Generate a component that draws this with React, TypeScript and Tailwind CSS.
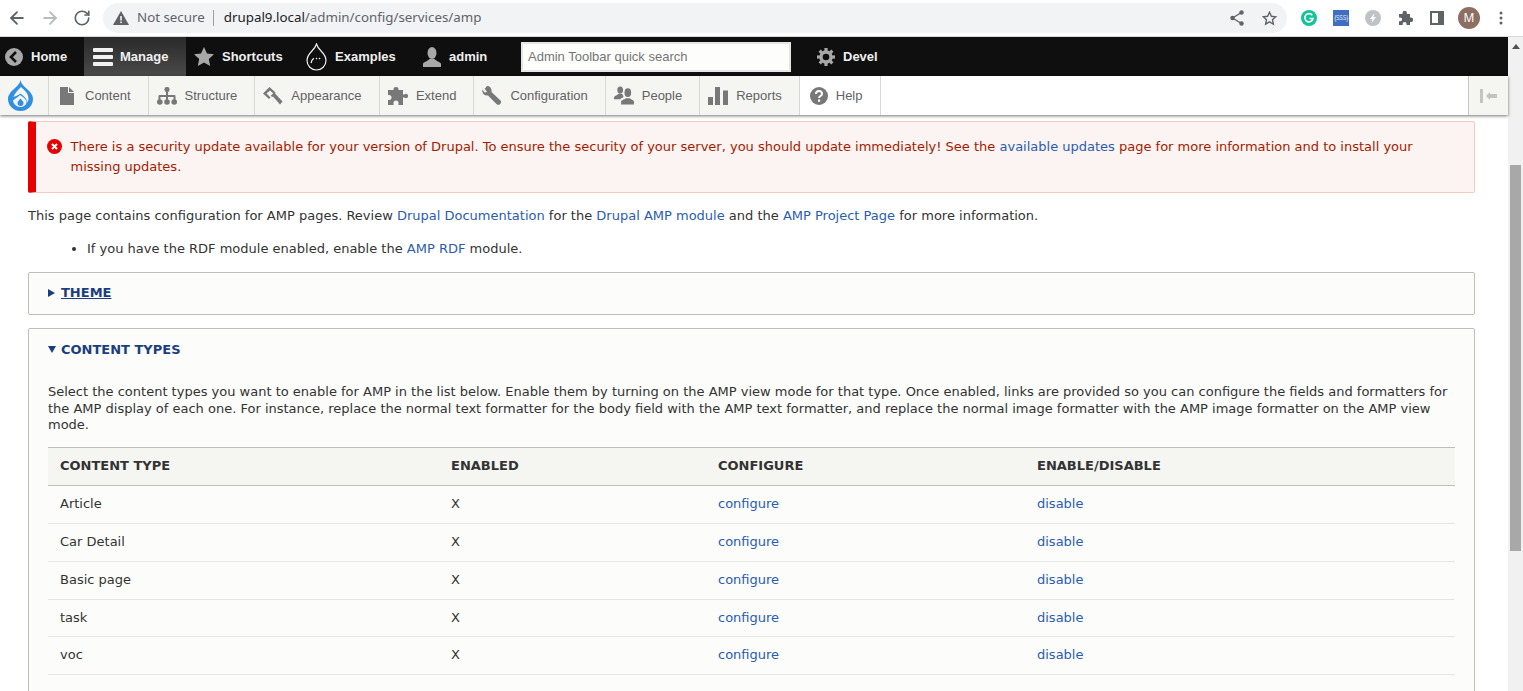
import { ArrowLeft, ArrowRight, RotateCw } from "lucide-react";

const dejavu = "font-['DejaVu_Sans',sans-serif]";

// admin toolbar icons, all grey fills
function FileIcon() {
  return (
    <svg width="14" height="18" viewBox="0 0 14 18" fill="#787878">
      <path d="M0 0h8v6h6v12H0z" />
      <path d="M9 0l5 5H9z" />
    </svg>
  );
}

function StructureIcon() {
  return (
    <svg width="20" height="18" viewBox="0 0 20 18" fill="#787878">
      <rect x="7.500" y="0" width="5" height="5" rx="2" />
      <path d="M9 4h2v4h6.500a1 1 0 0 1 1 1v4h-2v-3H11v3H9v-3H3.500v3h-2V9a1 1 0 0 1 1-1H9z" />
      <circle cx="2.800" cy="15" r="2.800" />
      <circle cx="10" cy="15" r="2.800" />
      <circle cx="17.200" cy="15" r="2.800" />
    </svg>
  );
}

function HammerIcon() {
  return (
    <svg width="20" height="18" viewBox="0 0 20 18" fill="#787878">
      <path d="M0 6.500L6.500 0l6 5.500-1.500 1.500-4-3.500L3.500 6.500l4 4L6 12z" />
      <path d="M7.500 9L11 5.500l2 1.500-3 3z" />
      <path d="M10 9.500l2.500-2.500 7 7.500-2.500 3z" />
    </svg>
  );
}

function PuzzleIcon() {
  return (
    <svg width="20" height="18" viewBox="0 0 20 18" fill="#787878">
      <path d="M0 3h5.500V2a2.500 2 0 0 1 5 0v1H15v4.500h1.500a2 2 0 0 1 3.500 1.500 2 2 0 0 1-3.500 1.500H15V18h-4.500v-2a2.500 2.500 0 0 0-5 0v2H0v-5h1a2.500 2.500 0 0 0 0-5H0z" />
    </svg>
  );
}

function WrenchIcon() {
  return (
    <svg width="20" height="19" viewBox="0 0 20 19" fill="#787878">
      <path d="M5 0L2.800 2.800 5 6 2.500 6.500 0.500 3.500C-0.500 7 2 10 6 9.500l9 9c2 1 4.500-1 4-3.500L9.500 6C10 2.500 8 0 5 0z" />
    </svg>
  );
}

function PeopleIcon() {
  return (
    <svg width="21" height="19" viewBox="0 0 21 19" fill="#787878">
      <ellipse cx="6.500" cy="3.800" rx="3" ry="3.800" />
      <path d="M0 13.500v-2C0 10 3 9.500 4.500 8h4C9.500 9 10 10 10 11c-2 1-3 2-3.500 2.500z" />
      <ellipse cx="14.500" cy="6.500" rx="3.500" ry="4.500" />
      <path d="M7.500 19v-3c0-1.500 3-2 5-3.500h4c2 1.500 4.500 2 4.500 3.500v3z" />
    </svg>
  );
}

function BarsIcon() {
  return (
    <svg width="20" height="18" viewBox="0 0 20 18" fill="#787878">
      <rect x="0" y="10" width="5" height="8" />
      <rect x="7" y="0" width="5" height="18" />
      <rect x="15" y="3.500" width="5" height="14.500" />
    </svg>
  );
}

function HelpIcon() {
  return (
    <svg width="18" height="18" viewBox="0 0 18 18">
      <circle cx="9" cy="9" r="9" fill="#787878" />
      <path d="M6 7c0-4 6-4 6 0 0 2-3 2-3 4" fill="none" stroke="#ffffff" strokeWidth="2" />
      <rect x="8" y="12.500" width="2.200" height="2.200" fill="#ffffff" />
    </svg>
  );
}

function GearIcon() {
  return (
    <svg width="18" height="18" viewBox="0 0 18 18">
      <circle cx="9" cy="9" r="5" fill="none" stroke="#a8a8a8" strokeWidth="3.400" />
      {[0, 45, 90, 135, 180, 225, 270, 315].map((a) => (
        <rect key={a} x="7.400" y="0" width="3.200" height="3.500" fill="#a8a8a8" transform={`rotate(${a} 9 9)`} />
      ))}
    </svg>
  );
}

function DrupalDrop() {
  return (
    <svg width="25" height="31" viewBox="0 0 25 31">
      <path
        d="M12.500 0c.5 3.500 3 5.500 6 8.500 3.500 3 6.500 6.500 6.500 10.500a12.500 12 0 0 1-25 0c0-4 3-7.500 6.500-10.500 3-3 5.500-5 6-8.500z"
        fill="#2f8fe0"
      />
      <path
        d="M5.500 17C6.500 13 10 10 13 7c3 3 7.500 6 7.500 11.500 0 1.500-.5 3-1 4-1-4.500-4-6.500-7-9-2 1.500-4.500 2.500-7 3.500z"
        fill="#f5f5f2"
      />
      <path d="M5 20.500c.5 4 4 6.500 7.500 6.500s6.500-2.500 6-6c-1-2.500-4-4.500-6.500-6-2 2-4.500 3.500-7 5.500z" fill="#f5f5f2" />
      <path d="M12.500 18.500c1 1.500 3 2.800 3 4.500a3 3 0 0 1-6 0c0-1.700 2-3 3-4.500z" fill="#2f8fe0" />
    </svg>
  );
}

function TopItem({ icon, label, active }: { icon: React.ReactNode; label: string; active?: boolean }) {
  return (
    <div
      className={`flex items-center h-full text-[13px] font-bold text-[#f0f0f0] ${
        active ? "bg-gradient-to-b from-[#2a2a2a] to-[#4a4a4a] px-[9px] gap-[7px]" : "gap-[8px]"
      }`}
    >
      {icon}
      <span>{label}</span>
    </div>
  );
}

function TrayItem({
  icon,
  label,
  first,
  wide,
}: {
  icon: React.ReactNode;
  label: string;
  first?: boolean;
  wide?: boolean;
}) {
  return (
    <div
      className={`flex items-center h-full pl-[8px] gap-[8px] border-r border-[#d8d8d4] bg-[#f5f5f2] text-[13px] text-[#636363] ${
        first ? "border-l" : ""
      } ${wide ? "pr-[17.500px]" : "pr-[17px]"}`}
    >
      <span className="w-[20px] flex justify-center">{icon}</span>
      <span>{label}</span>
    </div>
  );
}

const rows = ["Article", "Car Detail", "Basic page", "task", "voc"];

function A({ children }: { children: React.ReactNode }) {
  return <span className="text-[#2a5db0]">{children}</span>;
}

export default function App() {
  return (
    <div className="h-[691px] w-[1523px] overflow-hidden flex flex-col bg-white">
      {/* browser chrome */}
      <div className="h-[37px] shrink-0 border-b border-[#d8d8d8] flex items-center font-['Noto_Sans',sans-serif]">
        <div className="flex items-center pl-[7px] gap-[13px] w-[103px]">
          <ArrowLeft size={20} strokeWidth={2.25} className="text-[#5f6368]" />
          <ArrowRight size={20} strokeWidth={2.25} className="text-[#b9bbbe]" />
          <RotateCw size={18} strokeWidth={2.25} className="text-[#5f6368]" />
        </div>
        <div className="w-[1184px] h-[30px] rounded-[15px] bg-[#f1f3f4] flex items-center pl-[10px] pr-[8px]">
          <svg width="16" height="14" viewBox="0 0 16 14">
            <path d="M8 0l8 14H0z" fill="#5f6368" />
            <rect x="7.200" y="5" width="1.600" height="4.500" fill="#f1f3f4" />
            <rect x="7.200" y="10.500" width="1.600" height="1.600" fill="#f1f3f4" />
          </svg>
          <span className="ml-[8px] text-[13.330px] text-[#5f6368]">Not secure</span>
          <span className="ml-[8px] mr-[10px] w-px h-[16px] bg-[#9aa0a6]" />
          <span className="text-[13.330px] text-[#202124]">drupal9.local</span>
          <span className="text-[13.330px] text-[#5f6368]">/admin/config/services/amp</span>
          <div className="ml-auto flex items-center gap-[18px] pr-[2px]">
            <svg width="14" height="16" viewBox="0 0 14 16" fill="#5f6368" stroke="#5f6368" strokeWidth="1.300">
              <path d="M11.500 2.500L2.500 8l9 5.500" fill="none" />
              <circle cx="11.500" cy="2.500" r="1.600" />
              <circle cx="2.500" cy="8" r="1.600" />
              <circle cx="11.500" cy="13.500" r="1.600" />
            </svg>
            <svg width="15" height="15" viewBox="0 0 15 15" fill="none" stroke="#5f6368" strokeWidth="1.400">
              <path d="M7.500 1.300l1.900 4 4.300.5-3.200 3 .9 4.300-3.900-2.200-3.900 2.200.9-4.300-3.200-3 4.300-.5z" />
            </svg>
          </div>
        </div>
        <div className="flex items-center flex-1 pl-[14px] gap-[16px]">
          <svg width="16" height="16" viewBox="0 0 16 16">
            <circle cx="8" cy="8" r="8" fill="#15c39a" />
            <path d="M11.300 5.300A4.100 4.100 0 1 0 12 8.500H8.500" fill="none" stroke="#fff" strokeWidth="1.600" />
          </svg>
          <div className="w-[16px] h-[16px] bg-[#3f6fc0] flex items-center justify-center text-[#dfe8f7] text-[6.500px] tracking-[-0.3px]">
            {"{SSS}"}
          </div>
          <svg width="16" height="16" viewBox="0 0 16 16">
            <circle cx="8" cy="8" r="8" fill="#c0c2c6" />
            <path d="M9.500 3L5 9h2.500L6.500 13 11 7H8.500z" fill="#fff" />
          </svg>
          <svg width="16" height="16" viewBox="0 0 16 16" fill="#5f6368" className="ml-[1px]">
            <path d="M1 4h3.500V3a2.200 2.200 0 0 1 4.400 0v1H12v3.500h1a2.200 2.200 0 0 1 0 4.400h-1V15H8.500v-1.200a1.900 1.900 0 0 0-3.800 0V15H1v-3.800h1.200a1.900 1.900 0 0 0 0-3.800H1z" />
          </svg>
          <div className="w-[14px] h-[14px] border-2 border-[#5f6368] border-r-[6px]" />
          <div className="w-[22px] h-[22px] rounded-full bg-[#8d6e63] flex items-center justify-center text-white text-[12px] -ml-[2px]">
            M
          </div>
          <svg width="4" height="14" viewBox="0 0 4 14" fill="#5f6368" className="ml-[3px]">
            <circle cx="2" cy="2" r="1.500" />
            <circle cx="2" cy="7" r="1.500" />
            <circle cx="2" cy="12" r="1.500" />
          </svg>
        </div>
      </div>

      <div className="flex flex-1 min-h-0">
        <div className="w-[1508px] flex flex-col relative">
          {/* admin toolbar */}
          <div className="h-[39px] shrink-0 bg-[#0f0f0f] flex items-center font-['Liberation_Sans',sans-serif]">
            <div className="pl-[5px] w-[84px]">
              <TopItem
                label="Home"
                icon={
                  <svg width="18" height="18" viewBox="0 0 18 18">
                    <circle cx="9" cy="9" r="9" fill="#a8a8a8" />
                    <path d="M11 4L6 9l5 5" fill="none" stroke="#0f0f0f" strokeWidth="2.600" />
                  </svg>
                }
              />
            </div>
            <div className="h-full w-[102px]">
              <TopItem
                active
                label="Manage"
                icon={
                  <svg width="20" height="18" viewBox="0 0 20 18" fill="#f0f0f0">
                    <rect y="0" width="20" height="4" rx="1" />
                    <rect y="7" width="20" height="4" rx="1" />
                    <rect y="14" width="20" height="4" rx="1" />
                  </svg>
                }
              />
            </div>
            <div className="pl-[8px] w-[120px]">
              <TopItem
                label="Shortcuts"
                icon={
                  <svg width="20" height="19" viewBox="0 0 20 19" fill="#a8a8a8">
                    <path d="M10 0l3 6.500 7 .8-5.200 4.700 1.400 7L10 15.500 3.800 19l1.400-7L0 7.300l7-.8z" />
                  </svg>
                }
              />
            </div>
            <div className="w-[115px]">
              <TopItem
                label="Examples"
                icon={
                  <svg width="21" height="28" viewBox="0 0 21 28" fill="none" stroke="#f0f0f0" strokeWidth="1.200">
                    <path d="M10.500 1c1 3.500 3 5.500 5 7.500 3 3 4.500 6 4.500 9a9.500 9.500 0 0 1-19 0c0-3 1.500-6 4.500-9 2-2 4-4 5-7.500z" />
                    <path d="M5 20c.5-2 1.500-4 3-4.500" />
                    <path d="M10.500 15.500h.1M13.500 15.500h.1" strokeWidth="1.600" strokeLinecap="round" />
                  </svg>
                }
              />
            </div>
            <div className="w-[100px] pl-[2px]">
              <TopItem
                label="admin"
                icon={
                  <svg width="18" height="20" viewBox="0 0 18 20" fill="#a8a8a8">
                    <ellipse cx="9" cy="6" rx="4.500" ry="6" />
                    <path d="M0 20v-3c0-2 4.500-2.500 6.500-5h5c2 2.500 6.500 3 6.500 5v3z" />
                  </svg>
                }
              />
            </div>
            <div className="w-[270px] h-[30px] bg-[#fdfdfb] border-2 border-[#e6e6e6] flex items-center pl-[5px] text-[13px] text-[#757575]">
              Admin Toolbar quick search
            </div>
            <div className="pl-[26px]">
              <TopItem label="Devel" icon={<GearIcon />} />
            </div>
          </div>

          {/* tray */}
          <div className="h-[39px] shrink-0 bg-white flex items-center font-['Liberation_Sans',sans-serif] shadow-[0_1px_3px_rgba(0,0,0,0.55)] z-10">
            <div className="w-[48px] h-full bg-[#f5f5f2] flex items-center pl-[8px]">
              <DrupalDrop />
            </div>
            <TrayItem first icon={<FileIcon />} label="Content" />
            <TrayItem icon={<StructureIcon />} label="Structure" />
            <TrayItem wide icon={<HammerIcon />} label="Appearance" />
            <TrayItem icon={<PuzzleIcon />} label="Extend" />
            <TrayItem icon={<WrenchIcon />} label="Configuration" />
            <TrayItem icon={<PeopleIcon />} label="People" />
            <TrayItem icon={<BarsIcon />} label="Reports" />
            <div className="flex items-center h-full pl-[10px] pr-[17px] gap-[8px] border-r border-[#d8d8d4] text-[13px] text-[#636363]">
              <HelpIcon />
              <span>Help</span>
            </div>
            <div className="ml-auto w-[40px] h-full bg-[#f5f5f2] border-l border-[#c8c8c8] flex items-center justify-center gap-[3px]">
              <div className="w-[3px] h-[14px] bg-[#c4c4c4]" />
              <svg width="11" height="8" viewBox="0 0 11 8" fill="#c4c4c4">
                <path d="M0 4l4-4v2h7v4H4v2z" />
              </svg>
            </div>
          </div>

          {/* page content */}
          <div className={`flex-1 min-h-0 overflow-hidden pl-[28px] pr-[33px] pt-[6px] ${dejavu} text-[13px] text-[#333333]`}>
            <div className="h-[72px] rounded-[2px] border border-[#f9c9bf] border-l-[8px] border-l-[#e60000] bg-[#fcf4f2] flex text-[#a51b00] leading-[20px] pt-[15px] pl-[11px] pr-[40px]">
              <svg width="15" height="15" viewBox="0 0 15 15" className="shrink-0 mt-[2px]">
                <circle cx="7.500" cy="7.500" r="7.500" fill="#e60000" />
                <path d="M5 5l5 5M10 5l-5 5" stroke="#fff" strokeWidth="2" />
              </svg>
              <p className="ml-[8.500px]">
                There is a security update available for your version of Drupal. To ensure the security of your server, you should update immediately! See the{" "}
                <A>available updates</A> page for more information and to install your missing updates.
              </p>
            </div>

            <p className="mt-[13px] leading-[20px]">
              This page contains configuration for AMP pages. Review <A>Drupal Documentation</A> for the{" "}
              <A>Drupal AMP module</A> and the <A>AMP Project Page</A> for more information.
            </p>
            <ul className="mt-[13px] ml-[59px] list-disc leading-[20px]">
              <li>
                If you have the RDF module enabled, enable the <A>AMP RDF</A> module.
              </li>
            </ul>

            <div className="mt-[13px] h-[43px] rounded-[2px] border border-[#bfbfba] bg-[#fcfcfa] flex items-center pl-[19px] pb-[2px] gap-[6px] font-bold text-[#1b3e7f]">
              <span className="w-0 h-0 border-y-[4.500px] border-y-transparent border-l-[7px] border-l-[#1b3e7f]" />
              <span className="underline">THEME</span>
            </div>

            <div className="mt-[13px] rounded-[2px] border border-[#bfbfba] bg-[#fcfcfa] px-[19px] h-[400px]">
              <div className="h-[41px] flex items-center gap-[5px] font-bold text-[#1b3e7f]">
                <span className="w-0 h-0 border-x-[4px] border-x-transparent border-t-[7px] border-t-[#1b3e7f]" />
                <span>CONTENT TYPES</span>
              </div>
              <p className="mt-[14px] leading-[16.500px]">
                Select the content types you want to enable for AMP in the list below. Enable them by turning on the AMP view mode for that type. Once enabled, links are provided so you can configure the fields and formatters for the AMP display of each one. For instance, replace the normal text formatter for the body field with the AMP text formatter, and replace the normal image formatter with the AMP image formatter on the AMP view mode.
              </p>
              <table className="mt-[13px] w-full table-fixed border-collapse">
                <thead>
                  <tr className="h-[38px] bg-[#f5f5f2] border-y border-[#bfbfba] text-left">
                    <th className="w-[391px] pl-[12px] font-bold">CONTENT TYPE</th>
                    <th className="w-[267px] pl-[12px] font-bold">ENABLED</th>
                    <th className="w-[319px] pl-[12px] font-bold">CONFIGURE</th>
                    <th className="pl-[12px] font-bold">ENABLE/DISABLE</th>
                  </tr>
                </thead>
                <tbody>
                  {rows.map((r, i) => (
                    <tr key={r} className={`border-b border-[#e6e6e3] ${i === 3 ? "h-[37px]" : "h-[38px]"}`}>
                      <td className="pl-[12px]">{r}</td>
                      <td className="pl-[12px]">X</td>
                      <td className="pl-[12px]">
                        <A>configure</A>
                      </td>
                      <td className="pl-[12px]">
                        <A>disable</A>
                      </td>
                    </tr>
                  ))}
                </tbody>
              </table>
            </div>
          </div>
        </div>

        {/* scrollbar */}
        <div className="w-[15px] bg-[#f1f1f1] flex flex-col items-center pt-[7px]">
          <div className="w-0 h-0 border-x-[4px] border-x-transparent border-b-[5px] border-b-[#505050]" />
          <div className="mt-[116px] w-[11px] h-[386px] bg-[#a8a8a8]" />
        </div>
      </div>
    </div>
  );
}
